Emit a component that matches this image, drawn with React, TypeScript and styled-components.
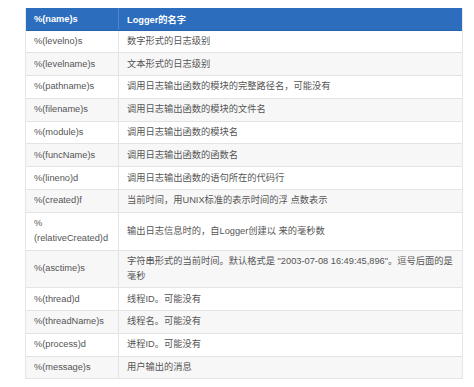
import React from "react";
import styled, { createGlobalStyle } from "styled-components";

const Global = createGlobalStyle`
  html, body { margin: 0; padding: 0; background: #ffffff; }
  body {
    font-family: "Liberation Sans", "Noto Sans CJK SC", sans-serif;
    -webkit-font-smoothing: antialiased;
  }
`;

const Page = styled.div`
  padding: 8px 0 0 25px;
`;

const Table = styled.div`
  width: 438px;
  display: flex;
  flex-direction: column;
  border-left: 1px solid #e6e6e6;
  border-right: 1px solid #e6e6e6;
  box-sizing: border-box;
`;

const HeadRow = styled.div`
  display: grid;
  grid-template-columns: 93px 1fr;
  background: #2c6ebd;
  height: 22.5px;
  box-sizing: border-box;
  border-bottom: 1px solid #2563ad;
`;

const HeadCell = styled.div<{ $first?: boolean }>`
  display: flex;
  align-items: center;
  padding: 0 8px;
  color: #ffffff;
  font-weight: bold;
  font-size: 9.25px;
  border-right: ${(p) => (p.$first ? "1px solid #4d86c9" : "none")};
`;

const Row = styled.div<{ $alt: boolean }>`
  display: grid;
  grid-template-columns: 93px 1fr;
  background: ${(p) => (p.$alt ? "#f7f7f7" : "#ffffff")};
  border-bottom: 1px solid #e4e4e4;
`;

const Cell = styled.div<{ $first?: boolean }>`
  display: flex;
  align-items: center;
  padding: 3.4px 4px 3.4px 8px;
  color: #555555;
  font-size: 9.25px;
  line-height: 15px;
  border-right: ${(p) => (p.$first ? "1px solid #e4e4e4" : "none")};
`;

const Text = styled.span``;

type Item = { key: React.ReactNode; desc: React.ReactNode };

const rows: Item[] = [
  { key: "%(levelno)s", desc: "数字形式的日志级别" },
  { key: "%(levelname)s", desc: "文本形式的日志级别" },
  { key: "%(pathname)s", desc: "调用日志输出函数的模块的完整路径名，可能没有" },
  { key: "%(filename)s", desc: "调用日志输出函数的模块的文件名" },
  { key: "%(module)s", desc: "调用日志输出函数的模块名" },
  { key: "%(funcName)s", desc: "调用日志输出函数的函数名" },
  { key: "%(lineno)d", desc: "调用日志输出函数的语句所在的代码行" },
  { key: "%(created)f", desc: "当前时间，用UNIX标准的表示时间的浮 点数表示" },
  {
    key: (
      <>
        %<br />
        (relativeCreated)d
      </>
    ),
    desc: "输出日志信息时的，自Logger创建以 来的毫秒数",
  },
  {
    key: "%(asctime)s",
    desc: (
      <>
        字符串形式的当前时间。默认格式是 "2003-07-08 16:49:45,896"。逗号后面的是
        <br />
        毫秒
      </>
    ),
  },
  { key: "%(thread)d", desc: "线程ID。可能没有" },
  { key: "%(threadName)s", desc: "线程名。可能没有" },
  { key: "%(process)d", desc: "进程ID。可能没有" },
  { key: "%(message)s", desc: "用户输出的消息" },
];

export default function App() {
  return (
    <>
      <Global />
      <Page>
        <Table>
          <HeadRow>
            <HeadCell $first>%(name)s</HeadCell>
            <HeadCell>Logger的名字</HeadCell>
          </HeadRow>
          {rows.map((r, i) => (
            <Row key={i} $alt={i % 2 === 1}>
              <Cell $first>
                <Text>{r.key}</Text>
              </Cell>
              <Cell>
                <Text>{r.desc}</Text>
              </Cell>
            </Row>
          ))}
        </Table>
      </Page>
    </>
  );
}
